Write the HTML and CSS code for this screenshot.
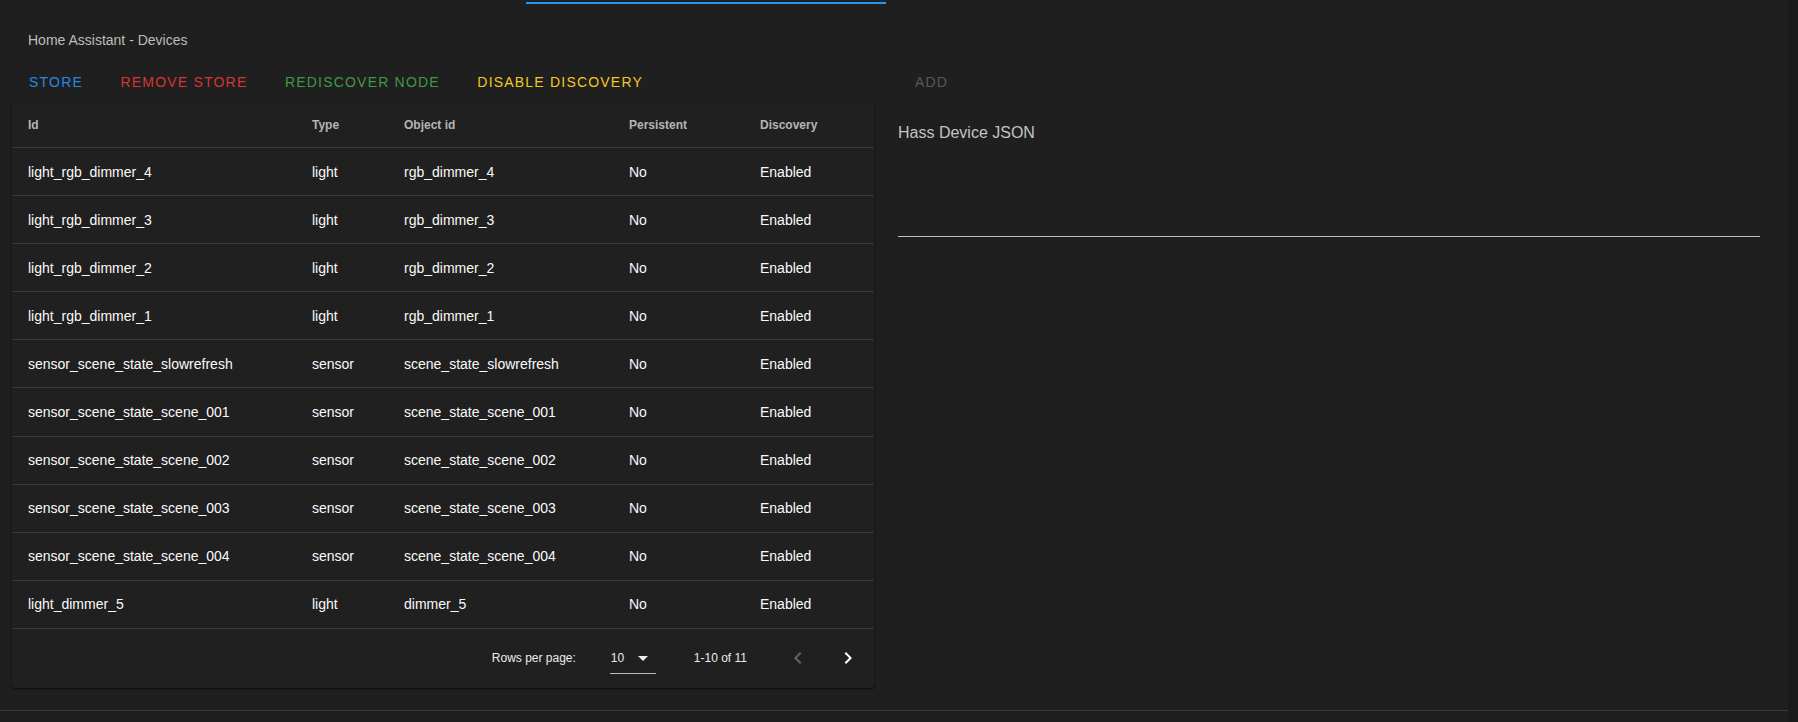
FILE: index.html
```html
<!DOCTYPE html>
<html lang="en">
<head>
<meta charset="utf-8">
<title>Home Assistant - Devices</title>
<link rel="stylesheet" href="styles.css">
</head>
<body>
<div class="app">
  <div class="main">
    <div class="tabbar"><div class="tab-indicator"></div></div>
    <div class="layout">
      <div class="title">Home Assistant - Devices</div>
      <div class="actions actions-left">
        <button class="btn btn-blue">Store</button>
        <button class="btn btn-red">Remove store</button>
        <button class="btn btn-green">Rediscover node</button>
        <button class="btn btn-yellow">Disable discovery</button>
      </div>
      <div class="actions actions-right">
        <button class="btn btn-disabled">Add</button>
      </div>
      <div class="card">
        <table class="devices">
          <colgroup>
            <col class="c-id"><col class="c-type"><col class="c-obj"><col class="c-pers"><col class="c-disc">
          </colgroup>
          <thead>
            <tr><th>Id</th><th>Type</th><th>Object id</th><th>Persistent</th><th>Discovery</th></tr>
          </thead>
          <tbody>
            <tr><td>light_rgb_dimmer_4</td><td>light</td><td>rgb_dimmer_4</td><td>No</td><td>Enabled</td></tr>
            <tr><td>light_rgb_dimmer_3</td><td>light</td><td>rgb_dimmer_3</td><td>No</td><td>Enabled</td></tr>
            <tr><td>light_rgb_dimmer_2</td><td>light</td><td>rgb_dimmer_2</td><td>No</td><td>Enabled</td></tr>
            <tr><td>light_rgb_dimmer_1</td><td>light</td><td>rgb_dimmer_1</td><td>No</td><td>Enabled</td></tr>
            <tr><td>sensor_scene_state_slowrefresh</td><td>sensor</td><td>scene_state_slowrefresh</td><td>No</td><td>Enabled</td></tr>
            <tr><td>sensor_scene_state_scene_001</td><td>sensor</td><td>scene_state_scene_001</td><td>No</td><td>Enabled</td></tr>
            <tr><td>sensor_scene_state_scene_002</td><td>sensor</td><td>scene_state_scene_002</td><td>No</td><td>Enabled</td></tr>
            <tr><td>sensor_scene_state_scene_003</td><td>sensor</td><td>scene_state_scene_003</td><td>No</td><td>Enabled</td></tr>
            <tr><td>sensor_scene_state_scene_004</td><td>sensor</td><td>scene_state_scene_004</td><td>No</td><td>Enabled</td></tr>
            <tr><td>light_dimmer_5</td><td>light</td><td>dimmer_5</td><td>No</td><td>Enabled</td></tr>
          </tbody>
        </table>
        <div class="pagination">
          <span class="rows-label">Rows per page:</span>
          <div class="select">
            <span class="select-value">10</span>
            <svg class="select-arrow" viewBox="0 0 24 24" width="24" height="24"><path d="M7 10l5 5 5-5z"/></svg>
          </div>
          <span class="range">1-10 of 11</span>
          <div class="icon-btn icon-disabled">
            <svg viewBox="0 0 24 24" width="24" height="24"><path d="M15.41 16.59L10.83 12l4.58-4.59L14 6l-6 6 6 6 1.41-1.41z"/></svg>
          </div>
          <div class="icon-btn">
            <svg viewBox="0 0 24 24" width="24" height="24"><path d="M8.59 16.59L13.17 12 8.59 7.41 10 6l6 6-6 6-1.41-1.41z"/></svg>
          </div>
        </div>
      </div>
      <div class="field">
        <label class="field-label">Hass Device JSON</label>
        <div class="field-input"></div>
      </div>
    </div>
    <div class="bottom-divider"></div>
  </div>
  <div class="scroll-track"></div>
</div>
</body>
</html>
```

FILE: styles.css
```css
* { box-sizing: border-box; }

body {
  margin: 0;
  background: #1f1f1f;
  font-family: "Liberation Sans", Arial, sans-serif;
  color: #fff;
}

.app {
  display: flex;
  height: 722px;
  overflow: hidden;
}

.main {
  flex: 1;
  min-width: 0;
}

.scroll-track {
  width: 10px;
  background: #1b1b1b;
}

.tabbar {
  height: 4px;
  padding-top: 2px;
}

.tab-indicator {
  margin-left: 526px;
  width: 360px;
  height: 2px;
  background: #2196f3;
}

.layout {
  display: grid;
  grid-template-columns: 862px 862px;
  column-gap: 24px;
  padding-left: 12px;
  margin-top: 26px;
}

.title {
  grid-column: 1;
  grid-row: 1;
  padding-left: 16px;
  font-size: 14px;
  line-height: 20px;
  color: #bdbdbd;
}

.actions {
  grid-row: 2;
  display: flex;
  gap: 21.5px;
  margin-top: 14px;
  padding-left: 9px;
}

.actions-left { grid-column: 1; }
.actions-right { grid-column: 2; }

.btn {
  font-family: inherit;
  font-size: 14px;
  line-height: 24px;
  padding: 6px 8px;
  letter-spacing: 1.2px;
  text-transform: uppercase;
  background: none;
  border: 0;
  cursor: pointer;
}

.btn-blue { color: #2389e6; }
.btn-red { color: #d63535; }
.btn-green { color: #3f9a45; }
.btn-yellow { color: #f4c81f; }
.btn-disabled { color: #595959; cursor: default; }

.card {
  grid-column: 1;
  grid-row: 3;
  margin-top: 3px;
  background: #202020;
  border-radius: 4px;
  box-shadow: 0 1px 3px rgba(0, 0, 0, 0.45), 0 1px 1px rgba(0, 0, 0, 0.3);
  overflow: hidden;
}

.devices {
  width: 862px;
  border-collapse: separate;
  border-spacing: 0;
  table-layout: fixed;
}

.c-id { width: 284px; }
.c-type { width: 92px; }
.c-obj { width: 225px; }
.c-pers { width: 131px; }
.c-disc { width: 130px; }

.devices th,
.devices td {
  padding: 0 16px;
  text-align: left;
  border-bottom: 1px solid #3a3a3a;
  white-space: nowrap;
}

.devices th {
  height: 45px;
  font-size: 12px;
  font-weight: bold;
  color: #b5b5b5;
}

.devices td {
  height: 48.1px;
  font-size: 14px;
  color: #fafafa;
}

.pagination {
  display: flex;
  align-items: center;
  justify-content: flex-end;
  height: 59px;
  padding-right: 2px;
  font-size: 12px;
  color: #ececec;
}

.rows-label { margin-right: 34px; }

.select {
  display: flex;
  align-items: center;
  width: 46px;
  height: 32px;
  padding-left: 1px;
  border-bottom: 1px solid #bdbdbd;
  margin-right: 38px;
}

.select-value { flex: 1; }

.select-arrow {
  fill: #ececec;
  margin-right: 1px;
}

.range { margin-right: 27px; }

.icon-btn {
  width: 48px;
  height: 48px;
  display: flex;
  align-items: center;
  justify-content: center;
  fill: #ffffff;
}

.icon-btn + .icon-btn { margin-left: 2px; }

.icon-disabled { fill: rgba(255, 255, 255, 0.3); }

.field {
  grid-column: 2;
  grid-row: 3;
  padding-top: 23px;
}

.field-label {
  display: block;
  font-size: 16px;
  line-height: 19px;
  color: #c4c4c4;
}

.field-input {
  height: 95px;
  border-bottom: 1px solid #bdbdbd;
}

.bottom-divider {
  margin-top: 22px;
  border-top: 1px solid #3a3a3a;
}
```
